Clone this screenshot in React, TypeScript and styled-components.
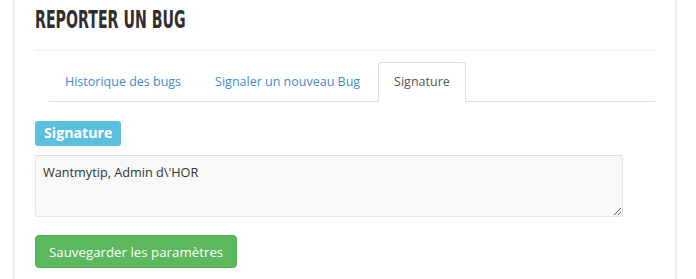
import styled, { createGlobalStyle } from "styled-components";

const GlobalStyle = createGlobalStyle`
  html, body {
    margin: 0;
    padding: 0;
    background: #fff;
    font-family: "Open Sans", "DejaVu Sans", sans-serif;
    font-size: 13px;
    color: #333;
  }
`;

const tabs = ["Historique des bugs", "Signaler un nouveau Bug", "Signature"];

export default function App() {
  return (
    <>
      <GlobalStyle />
      <Panel>
        <Title>
          <TitleText>Reporter un bug</TitleText>
        </Title>
        <Divider />

        <Tabs>
          {tabs.map((t) => (
            <Tab key={t} active={t === "Signature"}>
              {t}
            </Tab>
          ))}
        </Tabs>

        <Content>
          <Label>Signature</Label>
          <TextArea defaultValue={"Wantmytip, Admin d\\'HOR"} />
          <SaveButton>Sauvegarder les paramètres</SaveButton>
        </Content>
      </Panel>
    </>
  );
}

const Panel = styled.div`
  margin-left: 13px;
  width: 620px;
  min-height: 279px;
  padding: 0 20px;
  border-left: 2px solid #ededed;
  border-right: 2px solid #ededed;
  box-sizing: content-box;
`;

const Title = styled.h1`
  margin: 0;
  padding-top: 4px;
  height: 32px;
  line-height: 28px;
  overflow: visible;
`;

const TitleText = styled.span`
  display: inline-block;
  font-family: "DejaVu Sans Condensed", "DejaVu Sans", sans-serif;
  font-weight: bold;
  font-size: 25px;
  text-transform: uppercase;
  color: #2f2f2f;
  transform: scaleX(0.63);
  transform-origin: left center;
  white-space: nowrap;
`;

const Divider = styled.hr`
  margin: 14px 0 11px;
  border: 0;
  border-top: 1px solid #eee;
`;

const Tabs = styled.ul`
  list-style: none;
  margin: 0 0 0 14px;
  padding: 0;
  display: flex;
  border-bottom: 1px solid #ddd;
`;

const Tab = styled.li<{ active?: boolean }>`
  margin-right: 2px;
  margin-bottom: -1px;
  padding: 10px 15px;
  line-height: 18px;
  font-size: 12.5px;
  border: 1px solid ${(p) => (p.active ? "#ddd" : "transparent")};
  border-bottom-color: ${(p) => (p.active ? "#fff" : "transparent")};
  border-radius: 4px 4px 0 0;
  background: ${(p) => (p.active ? "#fff" : "transparent")};
  color: ${(p) => (p.active ? "#555" : "#428bca")};
  cursor: ${(p) => (p.active ? "default" : "pointer")};
`;

const Content = styled.div`
  padding-top: 19px;
  display: flex;
  flex-direction: column;
  align-items: flex-start;
`;

const Label = styled.span`
  display: inline-block;
  background: #5bc0de;
  color: #fff;
  font-weight: bold;
  font-size: 14.2px;
  line-height: 18px;
  padding: 3px 9px 4px;
  border-radius: 3px;
`;

const TextArea = styled.textarea`
  margin-top: 9px;
  width: 588px;
  height: 62px;
  box-sizing: border-box;
  padding: 7px 7px;
  background: #f8f8f8;
  border: 1px solid #e6e6e6;
  border-top-color: #dcdcdc;
  border-radius: 2px;
  font-family: "Open Sans", "DejaVu Sans", sans-serif;
  font-size: 12.7px;
  line-height: 18px;
  color: #333;
  outline: none;
`;

const SaveButton = styled.button`
  margin-top: 18px;
  height: 33px;
  padding: 0 13px;
  background: #5cb85c;
  border: 1px solid #4cae4c;
  border-radius: 4px;
  color: #fff;
  font-family: "Open Sans", "DejaVu Sans", sans-serif;
  font-size: 13.3px;
  cursor: pointer;
`;
